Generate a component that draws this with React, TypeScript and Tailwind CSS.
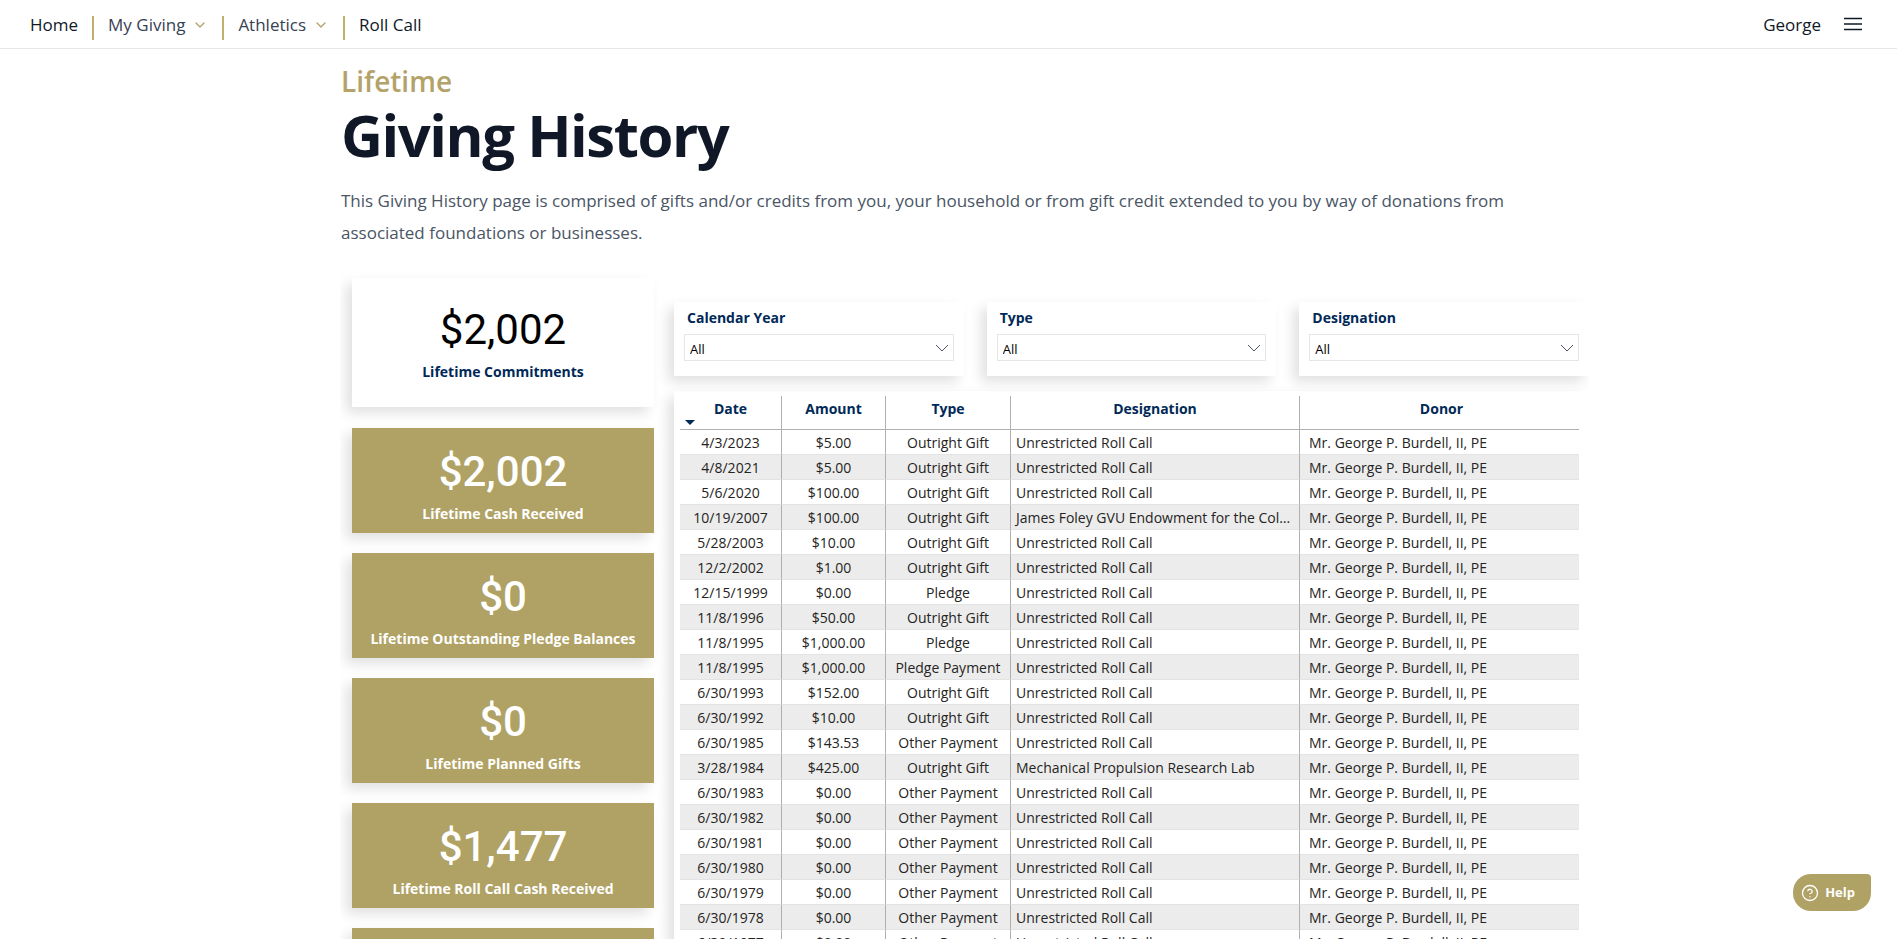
import React from 'react';
import { ChevronDown, CircleHelp } from 'lucide-react';
import { clsx } from 'clsx';

const navItems = [
  { name: 'Home', menu: false },
  { name: 'My Giving', menu: true },
  { name: 'Athletics', menu: true },
  { name: 'Roll Call', menu: false },
];

const totals = [
  { label: 'Lifetime Cash Received', value: '$2,002' },
  { label: 'Lifetime Outstanding Pledge Balances', value: '$0' },
  { label: 'Lifetime Planned Gifts', value: '$0' },
  { label: 'Lifetime Roll Call Cash Received', value: '$1,477' },
  { label: 'Lifetime Roll Call Commitments', value: '$1,477' },
];

const filters = [
  { id: 'calendar-year', label: 'Calendar Year' },
  { id: 'type', label: 'Type' },
  { id: 'designation', label: 'Designation' },
];

const ROLL_CALL = 'Unrestricted Roll Call';
const DONOR = 'Mr. George P. Burdell, II, PE';

const gifts = [
  ['4/3/2023', '$5.00', 'Outright Gift', ROLL_CALL],
  ['4/8/2021', '$5.00', 'Outright Gift', ROLL_CALL],
  ['5/6/2020', '$100.00', 'Outright Gift', ROLL_CALL],
  ['10/19/2007', '$100.00', 'Outright Gift', 'James Foley GVU Endowment for the College of Computing'],
  ['5/28/2003', '$10.00', 'Outright Gift', ROLL_CALL],
  ['12/2/2002', '$1.00', 'Outright Gift', ROLL_CALL],
  ['12/15/1999', '$0.00', 'Pledge', ROLL_CALL],
  ['11/8/1996', '$50.00', 'Outright Gift', ROLL_CALL],
  ['11/8/1995', '$1,000.00', 'Pledge', ROLL_CALL],
  ['11/8/1995', '$1,000.00', 'Pledge Payment', ROLL_CALL],
  ['6/30/1993', '$152.00', 'Outright Gift', ROLL_CALL],
  ['6/30/1992', '$10.00', 'Outright Gift', ROLL_CALL],
  ['6/30/1985', '$143.53', 'Other Payment', ROLL_CALL],
  ['3/28/1984', '$425.00', 'Outright Gift', 'Mechanical Propulsion Research Lab'],
  ['6/30/1983', '$0.00', 'Other Payment', ROLL_CALL],
  ['6/30/1982', '$0.00', 'Other Payment', ROLL_CALL],
  ['6/30/1981', '$0.00', 'Other Payment', ROLL_CALL],
  ['6/30/1980', '$0.00', 'Other Payment', ROLL_CALL],
  ['6/30/1979', '$0.00', 'Other Payment', ROLL_CALL],
  ['6/30/1978', '$0.00', 'Other Payment', ROLL_CALL],
  ['6/30/1977', '$0.00', 'Other Payment', ROLL_CALL],
];

const Navbar: React.FC = () => (
  <header className="flex h-[49px] items-center justify-between border-b border-gray-200 pr-[34px] pl-[30px] text-[17px] text-gray-900">
    <nav className="flex items-center pt-0.5">
      {navItems.map((item, index) => (
        <div key={item.name} className="flex items-center">
          {index > 0 && <span className="mx-[14px] mt-1.5 h-6 w-0.5 bg-[#c4ad6c]" />}
          {item.menu ? (
            <button type="button" className="flex items-center gap-[7px] text-gray-700">
              {item.name}
              <ChevronDown className="h-4 w-4 text-[#b3a369]" />
            </button>
          ) : (
            <a href="#">{item.name}</a>
          )}
        </div>
      ))}
    </nav>
    <div className="flex items-center gap-[22px]">
      <a href="#" className="pt-0.5 font-medium">George</a>
      <button type="button" aria-label="Open menu">
        <svg viewBox="0 0 20 14" className="h-[14px] w-5" stroke="currentColor" strokeWidth="1.5">
          <path d="M1 1.5h18M1 7h18M1 12.5h18" />
        </svg>
      </button>
    </div>
  </header>
);

const TotalCard: React.FC<{ label: string; value: string; plain?: boolean }> = ({ label, value, plain }) => (
  <div
    className={clsx(
      'flex flex-col items-center shadow-[-6px_6px_12px_rgba(0,0,0,0.12)]',
      plain ? 'mb-px h-[129px] bg-white pt-6 text-black' : 'h-[105px] bg-[#b0a264] pt-4 text-white'
    )}
  >
    <div className={clsx('font-[Roboto,sans-serif] text-[42px] leading-[56px]', !plain && 'font-medium')}>{value}</div>
    <div className={clsx('mt-1 text-[14px] leading-5 font-bold', plain && 'text-[#002957]')}>{label}</div>
  </div>
);

const FilterCard: React.FC<{ id: string; label: string }> = ({ id, label }) => (
  <div className="bg-white px-[10px] pt-1.5 pb-[15px] shadow-[-6px_6px_12px_rgba(0,0,0,0.12)]">
    <label htmlFor={id} className="block px-[3px] text-[14px] leading-5 font-bold text-[#002957]">
      {label}
    </label>
    <div className="relative mt-1.5">
      <select
        id={id}
        className="h-[27px] w-full appearance-none border border-[#e6e6e6] bg-white px-[5px] pt-1 text-[13px] text-black"
      >
        <option>All</option>
      </select>
      <svg
        viewBox="0 0 14 8"
        className="pointer-events-none absolute top-[10px] right-[5px] h-2 w-[14px]"
        fill="none"
        stroke="#4b5563"
      >
        <path d="M1 1l6 6 6-6" />
      </svg>
    </div>
  </div>
);

const GiftTable: React.FC = () => (
  <div className="mt-[15px] bg-white pt-[5px] pr-[10px] pl-1.5 shadow-[-6px_6px_12px_rgba(0,0,0,0.12)]">
    <table className="w-full table-fixed border-separate border-spacing-0 text-[14px] text-[#252423]">
      <colgroup>
        <col className="w-[102px]" />
        <col className="w-[104px]" />
        <col className="w-[125px]" />
        <col className="w-[289px]" />
        <col />
      </colgroup>
      <thead>
        <tr className="h-[34px] text-[#002957]">
          {['Date', 'Amount', 'Type', 'Designation', 'Donor'].map((name) => (
            <th
              key={name}
              className="relative border-r border-b border-[#b0b0b0] px-0 pt-[3px] pb-0 align-top leading-5 font-bold last:border-r-0 last:pl-1"
            >
              {name}
              {name === 'Date' && (
                <svg viewBox="0 0 10 5" className="absolute bottom-1 left-[5px] h-[5px] w-[10px]" fill="currentColor">
                  <path d="M0 0h10L5 5z" />
                </svg>
              )}
            </th>
          ))}
        </tr>
      </thead>
      <tbody>
        {gifts.map(([date, amount, type, designation], index) => (
          <tr key={index} className="h-[25px] leading-[22px] even:bg-[#ececec]">
            <td className="border-r border-b border-r-[#b0b0b0] border-b-[#e3e3e3] px-0 pt-0.5 pb-0 text-center">{date}</td>
            <td className="border-r border-b border-r-[#b0b0b0] border-b-[#e3e3e3] px-0 pt-0.5 pb-0 text-center">{amount}</td>
            <td className="border-r border-b border-r-[#b0b0b0] border-b-[#e3e3e3] px-0 pt-0.5 pb-0 text-center">{type}</td>
            <td className="truncate border-r border-b border-r-[#b0b0b0] border-b-[#e3e3e3] pt-0.5 pr-1.5 pb-0 pl-[5px]">
              {designation}
            </td>
            <td className="border-b border-b-[#e3e3e3] pt-0.5 pr-0 pb-0 pl-[9px]">{DONOR}</td>
          </tr>
        ))}
      </tbody>
    </table>
  </div>
);

const App: React.FC = () => (
  <div className="min-h-screen bg-white font-['Open_Sans','Noto_Sans',sans-serif]">
    <Navbar />
    <main className="mx-auto max-w-[1281px] pl-8">
      <div className="pt-3 pr-8 pl-px">
        <h1>
          <span className="block text-[28px] leading-10 font-semibold text-[#b3a369]">Lifetime</span>
          <span className="block text-[58px] leading-[68px] font-bold tracking-tight text-gray-900">Giving History</span>
        </h1>
        <p className="mt-4 text-[17px] leading-8 text-gray-600">
          This Giving History page is comprised of gifts and/or credits from you, your household or from gift credit
          extended to you by way of donations from associated foundations or businesses.
        </p>
      </div>
      <div className="mt-[17px] flex gap-5 overflow-hidden pt-3 pl-3">
        <div className="flex w-[302px] shrink-0 flex-col gap-5">
          <TotalCard label="Lifetime Commitments" value="$2,002" plain />
          {totals.map((total) => (
            <TotalCard key={total.label} {...total} />
          ))}
        </div>
        <div className="min-w-0 flex-1 pt-6">
          <div className="grid grid-cols-3 gap-[23px]">
            {filters.map((filter) => (
              <FilterCard key={filter.id} {...filter} />
            ))}
          </div>
          <GiftTable />
        </div>
      </div>
    </main>
    <button
      type="button"
      className="fixed right-[26px] bottom-7 flex h-[37px] items-center gap-1.5 rounded-[18px] rounded-tr-[4px] bg-[#b0a264] pr-4 pl-2 text-[13px] font-bold text-white"
    >
      <CircleHelp className="h-[18px] w-[18px]" strokeWidth={1.75} />
      Help
    </button>
  </div>
);

export default App;
